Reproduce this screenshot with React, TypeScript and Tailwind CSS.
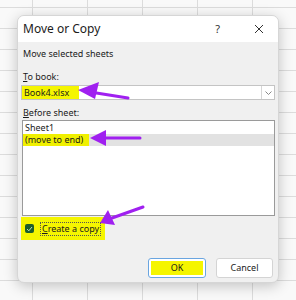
import React from "react";

const cols = [33, 55, 55, 55, 55, 55];
const rows = [8, 21, 21, 21, 21, 21, 21, 21, 21, 21, 21, 21, 21, 21, 21];

function SheetGrid() {
  return (
    <div className="flex flex-col">
      {rows.map((h, r) => (
        <div key={r} className="flex">
          {cols.map((w, c) => (
            <div
              key={c}
              className="shrink-0 border-r border-b border-[#dcdcdc] bg-[#f9f9f9]"
              style={{ width: w, height: h }}
            />
          ))}
        </div>
      ))}
    </div>
  );
}

function Arrows() {
  return (
    <svg className="pointer-events-none absolute inset-0" width="296" height="300" viewBox="0 0 296 300">
      <g stroke="#a020f0" strokeWidth="3" strokeLinecap="round" fill="#a020f0">
        <line x1="128" y1="98" x2="90" y2="92" />
        <polygon points="78,90 99,82 95,99" stroke="none" />
        <line x1="140" y1="138" x2="102" y2="138" />
        <polygon points="90,138 106,130 106,146" stroke="none" />
        <line x1="143" y1="207" x2="112" y2="218" />
        <polygon points="100,223 108,210 115,225" stroke="none" />
      </g>
    </svg>
  );
}

export default function App() {
  return (
    <main className="relative h-[300px] w-[296px] overflow-hidden bg-[#f9f9f9] font-['Noto_Sans',sans-serif] text-[#1b1b1b]">
      <SheetGrid />

      <div className="absolute left-[17px] top-[15px] flex h-[268px] w-[262px] flex-col overflow-hidden rounded-[7px] border border-[#d6d6d6] bg-[#f0f0f0] shadow-[0_3px_14px_rgba(0,0,0,0.22)]">
        <div className="flex h-[26px] shrink-0 items-center bg-white pl-[5px] text-[12px]">
          <span>Move or Copy</span>
          <span className="ml-auto mr-[34px] text-[11px] text-[#333]">?</span>
          <svg width="10" height="10" viewBox="0 0 10 10" className="mr-[14px]">
            <path d="M1 1L9 9M9 1L1 9" stroke="#333" strokeWidth="1" />
          </svg>
        </div>

        <div className="flex flex-1 flex-col px-[3px] text-[9px] leading-[14px]">
          <p className="mt-[5px] pl-[2px]">Move selected sheets</p>

          <p className="mt-[9px] pl-[2px]">
            <span className="underline">T</span>o book:
          </p>
          <div className="mt-[1px] flex h-[15px] items-stretch border border-[#c4c4c4] bg-white">
            <span className="flex items-center bg-[#f5f500] pl-[2px] pr-[10px]">Book4.xlsx</span>
            <div className="ml-auto flex w-[13px] items-center justify-center border-l border-[#d6d6d6]">
              <svg width="7" height="4" viewBox="0 0 7 4">
                <path d="M0.5 0.5L3.5 3.5L6.5 0.5" stroke="#888" fill="none" />
              </svg>
            </div>
          </div>

          <p className="mt-[6px] pl-[2px]">
            <span className="underline">B</span>efore sheet:
          </p>
          <div className="ml-[1px] flex h-[96px] flex-col border border-[#9a9a9a] bg-white pt-[1px]">
            <div className="flex h-[12px] items-center pl-[2px]">Sheet1</div>
            <div className="flex h-[12px] items-center bg-[#e2e2e2]">
              <span className="flex h-full items-center bg-[#f0f000] pl-[2px] pr-[6px]">(move to end)</span>
            </div>
          </div>

          <div className="mt-[1px] flex h-[23px] w-[84px] items-center bg-[#f5f500] pl-[4px]">
            <div className="flex h-[9px] w-[9px] items-center justify-center rounded-[2px] bg-[#1d5e2c]">
              <svg width="7" height="6" viewBox="0 0 7 6">
                <path d="M1 3L2.8 4.8L6 1" stroke="#b8e0c0" strokeWidth="1" fill="none" />
              </svg>
            </div>
            <span className="ml-[6px] border border-dotted border-[#555] px-[1px] leading-[12px]">
              <span className="underline">C</span>reate a copy
            </span>
          </div>

          <div className="mt-[18px] flex justify-end gap-[10px] pr-[2px]">
            <div className="flex h-[20px] w-[58px] items-center justify-center rounded-[3px] border border-[#6aa5e0] bg-white p-[2px]">
              <div className="flex h-full w-full items-center justify-center bg-[#f5f500]">OK</div>
            </div>
            <div className="flex h-[20px] w-[57px] items-center justify-center rounded-[3px] border border-[#d4d4d4] bg-white">
              Cancel
            </div>
          </div>
        </div>
      </div>

      <Arrows />
    </main>
  );
}
